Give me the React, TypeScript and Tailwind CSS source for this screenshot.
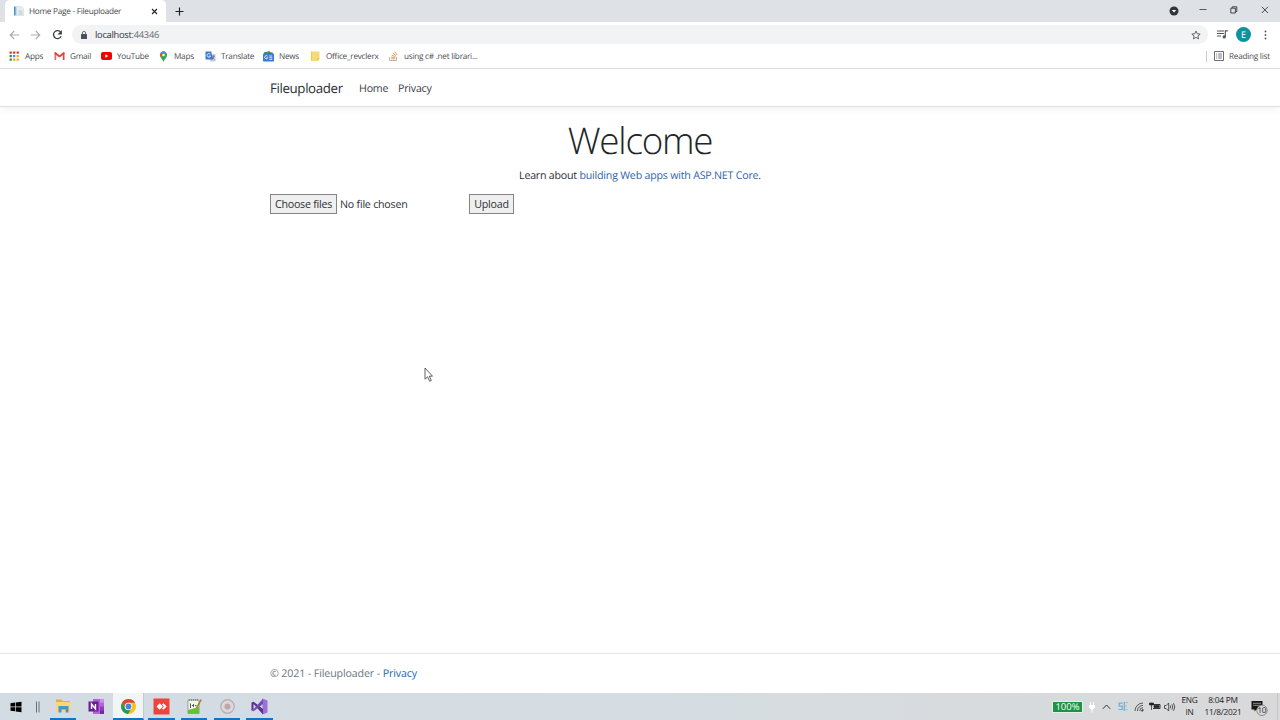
import type { ReactNode } from "react";

function WindowControls() {
  return (
    <div className="ml-auto flex h-[20px] items-center">
      <svg className="mr-[20px] mt-[2px] h-[10px] w-[10px]" viewBox="0 0 10 10">
        <circle cx="5" cy="5" r="4.5" fill="#33373a" />
        <path d="M2.8 4h4.4L5 6.6z" fill="#fff" />
      </svg>
      <svg className="mr-[23px] h-[8px] w-[8px]" viewBox="0 0 8 8">
        <path d="M0.5 3.5h7" stroke="#333" strokeWidth="0.8" />
      </svg>
      <svg className="mr-[23px] h-[8px] w-[8px]" viewBox="0 0 8 8" fill="none" stroke="#222" strokeWidth="0.8">
        <path d="M0.8 2.2h4.6v4.8H0.8zM2.2 2V0.8h4.6v4.8H5.8" />
      </svg>
      <svg className="mr-[11px] h-[8px] w-[8px]" viewBox="0 0 8 8">
        <path d="M0.8 0.8l6.2 6.2M7 0.8L0.8 7" stroke="#222" strokeWidth="0.8" />
      </svg>
    </div>
  );
}

function TabStrip() {
  return (
    <div className="flex h-[22px] bg-[#dee1e6] pl-[5px]">
      <div className="flex h-[22px] w-[161px] items-center rounded-t-[5px] bg-white pl-[9px]">
        <svg className="h-[10px] w-[10px]" viewBox="0 0 10 10">
          <path d="M2.5 0.5h5l2 2v7.5h-7z" fill="#e9ecef" stroke="#ccd3d9" strokeWidth="0.5" />
          <path d="M4.5 4h3v1h1v4h-4z" fill="#cfd9e1" />
          <path d="M0 0.5h1.7v9H0z" fill="#4795c6" />
          <path d="M1.9 0.5h.6v9h-.6z" fill="#a9cfe8" />
        </svg>
        <span className="ml-[5px] w-[122px] whitespace-nowrap pt-[2px] text-[8.2px] leading-none tracking-[-0.25px] text-[#45494d]">
          Home Page - Fileuploader
        </span>
        <svg className="h-[7px] w-[7px]" viewBox="0 0 7 7">
          <path d="M1 1l5 5M6 1L1 6" stroke="#222" strokeWidth="1.1" />
        </svg>
      </div>
      <svg className="ml-[9px] mt-[7px] h-[9px] w-[9px]" viewBox="0 0 9 9">
        <path d="M4.5 0.5v8M0.5 4.5h8" stroke="#222" strokeWidth="1.2" />
      </svg>
      <WindowControls />
    </div>
  );
}

function Toolbar() {
  return (
    <div className="flex h-[25px] items-center">
      <svg className="ml-[9px] h-[10px] w-[11px]" viewBox="0 0 11 10" fill="none" stroke="#a8abae" strokeWidth="1.1">
        <path d="M10.2 5H1.2M5.2 1L1.2 5l4 4" />
      </svg>
      <svg className="ml-[10px] h-[10px] w-[11px]" viewBox="0 0 11 10" fill="none" stroke="#a8abae" strokeWidth="1.1">
        <path d="M0.8 5h9M5.8 1l4 4-4 4" />
      </svg>
      <svg className="ml-[11px] h-[10px] w-[11px]" viewBox="0 0 11 10">
        <path d="M8.7 2.1A4 4 0 1 0 9.2 6.3" fill="none" stroke="#3c4043" strokeWidth="1.3" />
        <path d="M9.9 0v4.4H5.5z" fill="#3c4043" />
      </svg>
      <div className="ml-[9px] flex h-[19px] w-[1136px] items-center rounded-full bg-[#f1f3f4] pl-[9px] pr-[7px]">
        <svg className="h-[8px] w-[6px]" viewBox="0 0 6 8">
          <rect y="3" width="6" height="5" rx="0.6" fill="#4d5156" />
          <path d="M1.4 3.2V2a1.6 1.6 0 0 1 3.2 0v1.2" fill="none" stroke="#4d5156" strokeWidth="0.8" />
        </svg>
        <span className="ml-[8px] text-[9.33px] leading-none tracking-[-0.28px] text-[#6a6e73]">
          <span className="text-[#303438]">localhost</span>:44346
        </span>
        <svg className="ml-auto h-[10px] w-[10px]" viewBox="0 0 24 24">
          <path
            d="M12 2.5l2.9 6.6 7.1.6-5.4 4.7 1.6 7L12 17.7l-6.2 3.7 1.6-7L2 9.7l7.1-.6z"
            fill="none"
            stroke="#505458"
            strokeWidth="2.1"
          />
        </svg>
      </div>
      <svg className="ml-[9px] h-[9px] w-[11px]" viewBox="0 0 11 9">
        <path d="M0 1h7M0 3.5h7M0 6h4" stroke="#505458" strokeWidth="1" />
        <path d="M8.3 6.8V0.9h2.5" stroke="#505458" strokeWidth="1.1" fill="none" />
        <circle cx="7.2" cy="6.9" r="1.6" fill="#505458" />
      </svg>
      <div className="ml-[8px] flex h-[15px] w-[15px] items-center justify-center rounded-full bg-[#0e929d] text-[9px] leading-none text-white">
        E
      </div>
      <svg className="ml-[13px] h-[10px] w-[3px]" viewBox="0 0 3 10" fill="#505458">
        <circle cx="1.5" cy="1.5" r="0.9" />
        <circle cx="1.5" cy="5" r="0.9" />
        <circle cx="1.5" cy="8.5" r="0.9" />
      </svg>
    </div>
  );
}

function AppsIcon() {
  const colors = ["#d93025", "#d93025", "#d93025", "#1e8e3e", "#4285f4", "#f9ab00", "#1e8e3e", "#e8a500", "#f9ab00"];
  return (
    <svg className="h-[10px] w-[11px]" viewBox="0 0 11 10">
      {colors.map((c, i) => (
        <rect key={i} x={0.6 + (i % 3) * 3.5} y={0.5 + Math.floor(i / 3) * 3.5} width="2.2" height="2.2" fill={c} />
      ))}
    </svg>
  );
}

function GmailIcon() {
  return (
    <svg className="h-[10px] w-[11px]" viewBox="0 0 11 10">
      <path d="M0.5 2v7h1.7V3.8z" fill="#d9706a" />
      <path d="M10.5 2v7H8.8V3.8z" fill="#c8534b" />
      <path d="M0.5 1.3L1.5 1l4 3.2L9.5 1l1 .3v1.7L5.5 6.5l-5-3.5z" fill="#e0443a" />
    </svg>
  );
}

function YouTubeIcon() {
  return (
    <svg className="h-[10px] w-[11px]" viewBox="0 0 11 10">
      <rect y="1" width="11" height="8" rx="1.9" fill="#f00000" />
      <path d="M4.3 3.3L7.3 5l-3 1.7z" fill="#fff" />
    </svg>
  );
}

function MapsIcon() {
  return (
    <svg className="h-[11px] w-[11px]" viewBox="0 0 11 11">
      <path d="M5.5 11C5 8.8 2 7 2 4a3.5 3.5 0 0 1 7 0c0 3-3 4.8-3.5 7z" fill="#34a853" />
      <path d="M2.5 6L7.8 1.3A3.5 3.5 0 0 0 2 4c0 .8.2 1.4.5 2z" fill="#fbbc04" />
      <path d="M2 4c0-1 .3-1.7.9-2.3L5 3.6 2.5 6A4 4 0 0 1 2 4z" fill="#ea4335" />
      <path d="M2.9 1.7A3.5 3.5 0 0 1 7.9 1.4L5 3.8z" fill="#4285f4" />
      <circle cx="5.5" cy="4" r="1.2" fill="#fff" />
    </svg>
  );
}

function TranslateIcon() {
  return (
    <svg className="h-[11px] w-[11px]" viewBox="0 0 11 11">
      <path d="M4 3h6.5v7.5H5.5z" fill="#c7cfdb" />
      <path d="M0.5 0.5h5.7L8 8.5H1.2a.7.7 0 0 1-.7-.7z" fill="#4079dc" />
      <path d="M5.3 3.2A1.8 1.8 0 1 0 5.6 5H4" stroke="#fff" strokeWidth="0.8" fill="none" />
      <path d="M7 5.2h3M8.7 4.5c0 2-1 3.5-2 4M7.5 6c.5 1.2 1.3 2 2.2 2.5" stroke="#4d6b9d" strokeWidth="0.7" fill="none" />
    </svg>
  );
}

function NewsIcon() {
  return (
    <svg className="h-[11px] w-[11px]" viewBox="0 0 11 11">
      <path d="M5 0.5l5 1.2-.7 3H5z" fill="#b5534b" />
      <path d="M1 1.3L7 .3l.5 4H1z" fill="#2b9a55" />
      <rect y="2.5" width="11" height="8" rx="0.7" fill="#3b78dc" />
      <path d="M4.6 5.3A1.6 1.6 0 1 0 4.8 6.8H3.4M6.3 5h3M6.3 6.7h3M6.300 8.400h3" stroke="#fff" strokeWidth="0.8" fill="none" />
    </svg>
  );
}

function NoteIcon() {
  return (
    <svg className="h-[10px] w-[11px]" viewBox="0 0 11 10">
      <path d="M1 0.5h8.5v7L7.5 10H1z" fill="#f6d978" />
      <path d="M1 0.5h1v9.5H1z" fill="#efc95e" />
      <path d="M9.5 7.5h-2V10z" fill="#dfb34a" />
    </svg>
  );
}

function StackIcon() {
  return (
    <svg className="h-[10px] w-[11px]" viewBox="0 0 11 10" fill="none">
      <path d="M1.5 6v3.5h7V6" stroke="#b9b4ae" strokeWidth="1" />
      <path d="M3 7.8h4.2M3.1 6l4.1.7M3.7 4.1l3.8 1.6M4.9 2.2l3.2 2.5M6.7 0.5l2.3 3.3" stroke="#e8924f" strokeWidth="0.9" />
    </svg>
  );
}

type BookmarkProps = { icon: ReactNode; label: string; className: string };

function Bookmark({ icon, label, className }: BookmarkProps) {
  return (
    <div className={`flex shrink-0 items-center ${className}`}>
      {icon}
      <span className="ml-[5px] whitespace-nowrap pt-[2px]">{label}</span>
    </div>
  );
}

function BookmarksBar() {
  return (
    <div className="flex h-[22px] items-center border-b border-[#dcdee1] pb-[3px] pl-[9px] text-[8.2px] leading-none tracking-[-0.25px] text-[#4a4e52]">
      <Bookmark icon={<AppsIcon />} label="Apps" className="w-[45px]" />
      <Bookmark icon={<GmailIcon />} label="Gmail" className="w-[47px]" />
      <Bookmark icon={<YouTubeIcon />} label="YouTube" className="w-[57px]" />
      <Bookmark icon={<MapsIcon />} label="Maps" className="w-[47px]" />
      <Bookmark icon={<TranslateIcon />} label="Translate" className="w-[58px]" />
      <Bookmark icon={<NewsIcon />} label="News" className="w-[47px]" />
      <Bookmark icon={<NoteIcon />} label="Office_revclerx" className="w-[78px]" />
      <Bookmark icon={<StackIcon />} label="using c# .net librari..." className="w-[100px]" />
      <div className="ml-auto h-[11px] w-px bg-[#c8cacd]" />
      <svg className="ml-[7px] h-[10px] w-[10px]" viewBox="0 0 10 10" fill="none" stroke="#4a4e52" strokeWidth="0.8">
        <rect x="0.6" y="0.6" width="8.8" height="8.8" />
        <path d="M2.2 3h1M2.2 5h1M2.2 7h1M4.2 3h3.7M4.2 5h3.7M4.2 7h3.7" />
      </svg>
      <span className="ml-[5px] w-[51px] whitespace-nowrap pt-[2px]">Reading list</span>
    </div>
  );
}

function Page() {
  return (
    <div className="flex h-[624px] flex-col bg-white text-[10.67px] leading-[16px] tracking-[-0.22px] text-[#2b2f33]">
      <header className="flex h-[38px] shrink-0 items-center border-b border-[#dee2e6] pl-[270px] shadow-[0_3px_8px_rgba(0,0,0,0.05)]">
        <span className="w-[89px] text-[13.33px] tracking-[-0.38px]">Fileuploader</span>
        <span className="w-[39px] pt-[2px] text-[#3c4044]">Home</span>
        <span className="pt-[2px] text-[#3c4044]">Privacy</span>
      </header>
      <main className="mx-auto w-[740px] grow pt-[11px]">
        <h1 className="text-center text-[36.8px] font-light leading-[45px] tracking-[-1.2px] text-[#212529]">Welcome</h1>
        <p className="mt-[5px] text-center">
          Learn about <a className="text-[#2f65a8]">building Web apps with ASP.NET Core</a>.
        </p>
        <div className="mt-[10px] flex h-[20px] items-center">
          <button className="h-[20px] w-[67px] whitespace-nowrap border border-[#858585] bg-[#efefef] px-0 leading-none tracking-[-0.25px]">
            Choose files
          </button>
          <span className="ml-[3px] w-[129px] pt-[2px]">No file chosen</span>
          <button className="h-[20px] w-[45px] border border-[#858585] bg-[#efefef] leading-none tracking-[-0.2px]">Upload</button>
        </div>
      </main>
      <footer className="h-[40px] shrink-0 border-t border-[#e3e6e9] pl-[270px] pt-[12px] tracking-[-0.13px] text-[#6c757d]">
        © 2021 - Fileuploader - <a className="text-[#2465ad]">Privacy</a>
      </footer>
    </div>
  );
}

function TaskButton({ children, className }: { children: ReactNode; className: string }) {
  return (
    <div className={`flex h-full shrink-0 items-center justify-center border-b-2 border-b-[#1673c4] pt-[2px] ${className}`}>
      <svg className="h-[17px] w-[17px]" viewBox="0 0 17 17">
        {children}
      </svg>
    </div>
  );
}

function Taskbar() {
  return (
    <div className="flex h-[27px] items-center bg-linear-to-r from-[#d3dce3] via-[#d5dde2] to-[#d9d9da] text-[8.3px] leading-none tracking-[-0.25px] text-[#1c1c1c]">
      <svg className="ml-[10px] h-[12px] w-[12px]" viewBox="0 0 12 12" fill="#000">
        <path d="M0.5 2.3L5 1.6v4H0.5zM5.7 1.5L11.5.7v4.9H5.7zM0.5 6.3H5v4L0.5 9.7zM5.7 6.3h5.8v4.9l-5.8-.8z" />
      </svg>
      <svg className="ml-[14px] h-[12px] w-[4px]" viewBox="0 0 4 12">
        <path d="M0.5 0.5v11M3 0.5v11" stroke="#50565b" strokeWidth="0.8" />
      </svg>
      <TaskButton className="ml-[10px] w-[26px]">
        <path d="M1 1.5h5.5L7.5 3h7.5v10H1z" fill="#e0b04a" />
        <path d="M1 4h14.5v10H1z" fill="#fad775" />
        <path d="M3.5 14.5V8h10v6.5h-2.8v-3H6.5v3z" fill="#4499cb" />
      </TaskButton>
      <div className="flex h-full w-[37px] items-center justify-center pl-[3px]">
        <svg className="h-[17px] w-[17px]" viewBox="0 0 17 17">
          <path d="M5 1h11v15H5z" fill="#b165d8" />
          <path d="M12 1h4v3.7h-4z" fill="#cf8ee9" />
          <path d="M12 8.5h4v3.7h-4z" fill="#9040bf" />
          <path d="M12 12.2h4V16h-4z" fill="#742ba3" />
          <path d="M0.5 3.5h10v10h-10z" fill="#6c1d91" />
          <path d="M3.5 11V6l4 5V6" fill="none" stroke="#fff" strokeWidth="1.4" />
        </svg>
      </div>
      <TaskButton className="w-[31px] border-r border-r-[#c5c9cc] bg-[#f2f5f6]">
        <circle cx="8.5" cy="8.5" r="7.5" fill="#fbc116" />
        <path d="M2 4.8A7.5 7.5 0 0 1 15 4.8H8.5L5.5 10z" fill="#dc4638" />
        <path d="M2 4.8A7.5 7.5 0 0 0 8 16l3.5-5.5H5.3z" fill="#229b57" />
        <circle cx="8.5" cy="8.5" r="3.7" fill="#fff" />
        <circle cx="8.5" cy="8.5" r="2.9" fill="#4285dc" />
      </TaskButton>
      <TaskButton className="ml-[4px] w-[27px]">
        <path d="M0.5 0.5h16v16h-16z" fill="#ef443b" />
        <path d="M3.5 8.5l3.2-3.2 3.2 3.2-3.2 3.2z" fill="#fff" />
        <path d="M9 6.600l1.400-1.400 3.300 3.300-3.300 3.300-1.400-1.400 1.900-1.900z" fill="#fff" />
      </TaskButton>
      <TaskButton className="ml-[6px] w-[26px]">
        <path d="M2 2h11v13.5H2z" fill="#f3f6e8" stroke="#66705f" strokeWidth="0.6" />
        <path d="M2 12l11-3v6.500H2z" fill="#63c331" />
        <path d="M3 2h9" stroke="#555" strokeWidth="1.2" strokeDasharray="1 1" />
        <path d="M4.500 5.500v4.500M6 7.500h1M7.500 6v3M9 7.500h1.500" stroke="#3d443c" strokeWidth="0.9" />
        <path d="M15.3 1.5L10.5 10" stroke="#a97831" strokeWidth="1.5" />
      </TaskButton>
      <TaskButton className="ml-[7px] w-[26px]">
        <circle cx="8.5" cy="8.5" r="6.7" fill="#dadadd" stroke="#bdafb5" strokeWidth="1.4" />
        <circle cx="8.5" cy="8.5" r="3.1" fill="#c3a5ac" />
      </TaskButton>
      <TaskButton className="ml-[6px] w-[27px]">
        <path d="M11.5 0.5l5 2v12l-5 2z" fill="#9c70d7" />
        <path d="M0.5 4.5L2.5 3.7 12 11v5.5L2.5 5.9v5.2L0.5 12z" fill="#59328f" />
        <path d="M0.5 12.5l2 .8L12 6V.7L2.5 11.2l-2-.7z" fill="#714bb0" />
      </TaskButton>

      <div className="ml-auto flex h-full items-center">
        <div className="flex h-[12px] w-[31px] items-center justify-center border border-[#e4efe6] bg-[#1c9345] text-[9.5px] tracking-normal text-white">
          100%
        </div>
        <svg className="ml-[5px] h-[12px] w-[8px]" viewBox="0 0 8 12">
          <path d="M2.5 1v3M5.5 1v3M4 8v3.5" stroke="#fff" strokeWidth="1" />
          <path d="M1 4h6v2.5L5 8.5H3L1 6.5z" fill="#fff" />
        </svg>
        <svg className="ml-[6px] h-[8px] w-[9px]" viewBox="0 0 9 8">
          <path d="M0.8 5.8L4.5 2l3.7 3.8" stroke="#333" fill="none" strokeWidth="1" />
        </svg>
        <svg className="ml-[7px] h-[11px] w-[10px]" viewBox="0 0 10 11">
          <path d="M4.5 2.2H1.2v3h3v3.3H0.5M6.3 1v9" stroke="#6ab0d8" fill="none" strokeWidth="1.2" />
          <path d="M7 1.5h3M7 5h2M7 8.5h3" stroke="#a5bfcc" strokeWidth="1" />
        </svg>
        <svg className="ml-[6px] h-[10px] w-[10px]" viewBox="0 0 10 10" fill="none" stroke="#34383b" strokeWidth="0.8">
          <path d="M1 9a8 8 0 0 1 8-8M3.4 9A5.6 5.6 0 0 1 9 3.4M5.7 9A3.3 3.3 0 0 1 9 5.7" />
          <path d="M7.3 9L9 7.3V9z" fill="#34383b" />
        </svg>
        <svg className="ml-[5px] h-[9px] w-[12px]" viewBox="0 0 12 9">
          <path d="M3 2.5h8v4H4" stroke="#222" strokeWidth="0.9" fill="none" />
          <path d="M5 3.5h5v2H5zM0.5 1v2h4V1zM2.5 3v5" fill="#222" stroke="#222" strokeWidth="0.7" />
        </svg>
        <svg className="ml-[3px] h-[10px] w-[12px]" viewBox="0 0 12 10" fill="none" stroke="#333" strokeWidth="0.8">
          <path d="M0.5 3.5h1.7L4.7 1v8L2.2 6.5H0.5zM6.2 3.5q1 1.5 0 3M7.9 2.3q1.8 2.7 0 5.4M9.5 1.2q2.6 3.8 0 7.6" />
        </svg>
        <div className="ml-[5px] flex w-[17px] flex-col items-center gap-[3.5px] pt-px">
          <span>ENG</span>
          <span>IN</span>
        </div>
        <div className="ml-[6px] flex w-[38px] flex-col items-center gap-[3.5px] whitespace-nowrap pt-px">
          <span>8:04 PM</span>
          <span>11/8/2021</span>
        </div>
        <svg className="ml-[9px] h-[18px] w-[18px]" viewBox="0 0 18 18">
          <path d="M0.5 3h11v8.5H5.5L3.5 13.500v-2h-3z" fill="#171717" />
          <path d="M2 5.3h8M2 7.3h8" stroke="#ddd" strokeWidth="0.6" />
          <circle cx="11" cy="12.3" r="5.2" fill="#dadadb" stroke="#555" strokeWidth="0.6" />
          <text x="10.8" y="15.2" textAnchor="middle" fontSize="8" fill="#222">
            10
          </text>
        </svg>
        <div className="ml-[8px] mr-[2px] h-full w-px bg-[#c3c5c6]" />
      </div>
    </div>
  );
}

function Pointer() {
  return (
    <svg className="absolute left-[424px] top-[367px] h-[16px] w-[10px]" viewBox="0 0 10 16">
      <path
        d="M1 1v11.200l2.600-2.400 2 4.400 1.700-.8-2-4.200h3.200z"
        fill="#fff"
        stroke="#3a3a3a"
        strokeWidth="0.8"
        strokeLinejoin="round"
      />
    </svg>
  );
}

export default function App() {
  return (
    <div className="relative h-[720px] w-[1280px] overflow-hidden bg-white font-['Open_Sans','Noto_Sans',sans-serif] [text-rendering:geometricPrecision]">
      <TabStrip />
      <Toolbar />
      <BookmarksBar />
      <Page />
      <Taskbar />
      <Pointer />
    </div>
  );
}
